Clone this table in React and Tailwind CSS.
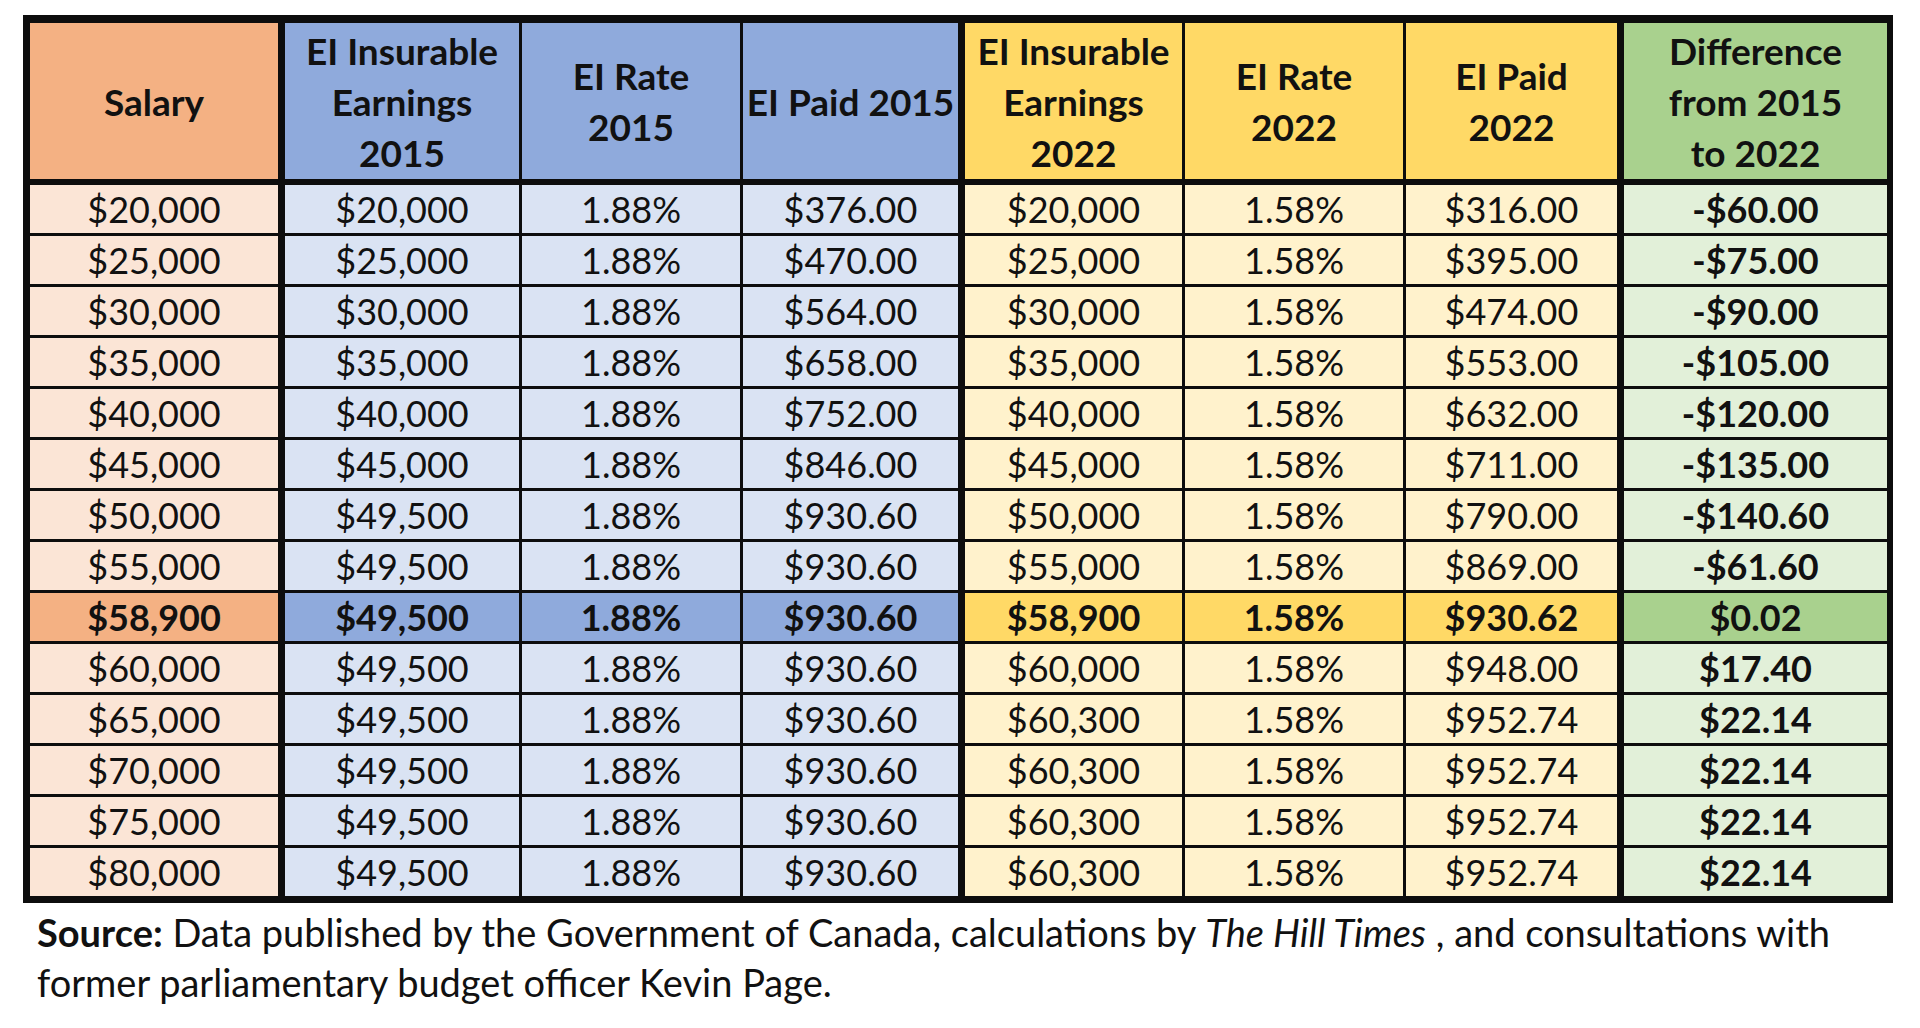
import React from "react";

const cols = [
  { w: "w-[248px]", gap: "", head: "bg-[#f4b183]", pale: "bg-[#fbe5d6]" },
  { w: "w-[234px]", gap: "ml-[7px]", head: "bg-[#8faadc]", pale: "bg-[#dae3f3]" },
  { w: "w-[218px]", gap: "ml-[3px]", head: "bg-[#8faadc]", pale: "bg-[#dae3f3]" },
  { w: "w-[215px]", gap: "ml-[3px]", head: "bg-[#8faadc]", pale: "bg-[#dae3f3]" },
  { w: "w-[217px]", gap: "ml-[7px]", head: "bg-[#ffd966]", pale: "bg-[#fff2cc]" },
  { w: "w-[218px]", gap: "ml-[3px]", head: "bg-[#ffd966]", pale: "bg-[#fff2cc]" },
  { w: "w-[211px]", gap: "ml-[3px]", head: "bg-[#ffd966]", pale: "bg-[#fff2cc]" },
  { w: "w-[263px]", gap: "ml-[7px]", head: "bg-[#a9d18e]", pale: "bg-[#e2f0d9]" },
];

const headers = [
  ["Salary"],
  ["EI Insurable", "Earnings", "2015"],
  ["EI Rate", "2015"],
  ["EI Paid 2015"],
  ["EI Insurable", "Earnings", "2022"],
  ["EI Rate", "2022"],
  ["EI Paid", "2022"],
  ["Difference", "from 2015", "to 2022"],
];

const rows = [
  ["$20,000", "$20,000", "1.88%", "$376.00", "$20,000", "1.58%", "$316.00", "-$60.00"],
  ["$25,000", "$25,000", "1.88%", "$470.00", "$25,000", "1.58%", "$395.00", "-$75.00"],
  ["$30,000", "$30,000", "1.88%", "$564.00", "$30,000", "1.58%", "$474.00", "-$90.00"],
  ["$35,000", "$35,000", "1.88%", "$658.00", "$35,000", "1.58%", "$553.00", "-$105.00"],
  ["$40,000", "$40,000", "1.88%", "$752.00", "$40,000", "1.58%", "$632.00", "-$120.00"],
  ["$45,000", "$45,000", "1.88%", "$846.00", "$45,000", "1.58%", "$711.00", "-$135.00"],
  ["$50,000", "$49,500", "1.88%", "$930.60", "$50,000", "1.58%", "$790.00", "-$140.60"],
  ["$55,000", "$49,500", "1.88%", "$930.60", "$55,000", "1.58%", "$869.00", "-$61.60"],
  ["$58,900", "$49,500", "1.88%", "$930.60", "$58,900", "1.58%", "$930.62", "$0.02"],
  ["$60,000", "$49,500", "1.88%", "$930.60", "$60,000", "1.58%", "$948.00", "$17.40"],
  ["$65,000", "$49,500", "1.88%", "$930.60", "$60,300", "1.58%", "$952.74", "$22.14"],
  ["$70,000", "$49,500", "1.88%", "$930.60", "$60,300", "1.58%", "$952.74", "$22.14"],
  ["$75,000", "$49,500", "1.88%", "$930.60", "$60,300", "1.58%", "$952.74", "$22.14"],
  ["$80,000", "$49,500", "1.88%", "$930.60", "$60,300", "1.58%", "$952.74", "$22.14"],
];

// the break-even row is drawn in the header colours
const HIGHLIGHT = 8;

export default function App() {
  return (
    <div className="min-h-screen bg-white pt-[15px] pl-[23px] font-['Lato',sans-serif] text-[#111]">
      {/* Table */}
      <div className="inline-flex flex-col bg-[#0d0d0d] pt-[8px] pb-[7px] pl-[7px] pr-[6px]">
        <div className="flex h-[156px] mb-[6px]">
          {headers.map((lines, i) => (
            <div
              key={i}
              className={`${cols[i].w} ${cols[i].gap} ${cols[i].head} flex flex-col items-center justify-center text-center text-[37px] font-bold leading-[51px] whitespace-nowrap`}
            >
              {lines.map((l) => (
                <span key={l}>{l}</span>
              ))}
            </div>
          ))}
        </div>

        <div className="flex flex-col gap-[3px]">
          {rows.map((row, r) => {
            const hi = r === HIGHLIGHT;
            return (
              <div key={r} className="flex h-[48px]">
                {row.map((v, i) => (
                  <div
                    key={i}
                    className={`${cols[i].w} ${cols[i].gap} ${hi ? cols[i].head : cols[i].pale} ${hi || i === 7 ? "font-bold" : ""} flex items-center justify-center text-[36px] leading-[48px]`}
                  >
                    {v}
                  </div>
                ))}
              </div>
            );
          })}
        </div>
      </div>

      {/* Source note */}
      <p className="ml-[14px] mt-[4px] text-[38px] leading-[50px]">
        <span className="font-bold">Source:</span> Data published by the Government of Canada, calculations by{" "}
        <span className="italic">The Hill Times</span> , and consultations with
        <br />
        former parliamentary budget officer Kevin Page.
      </p>
    </div>
  );
}
